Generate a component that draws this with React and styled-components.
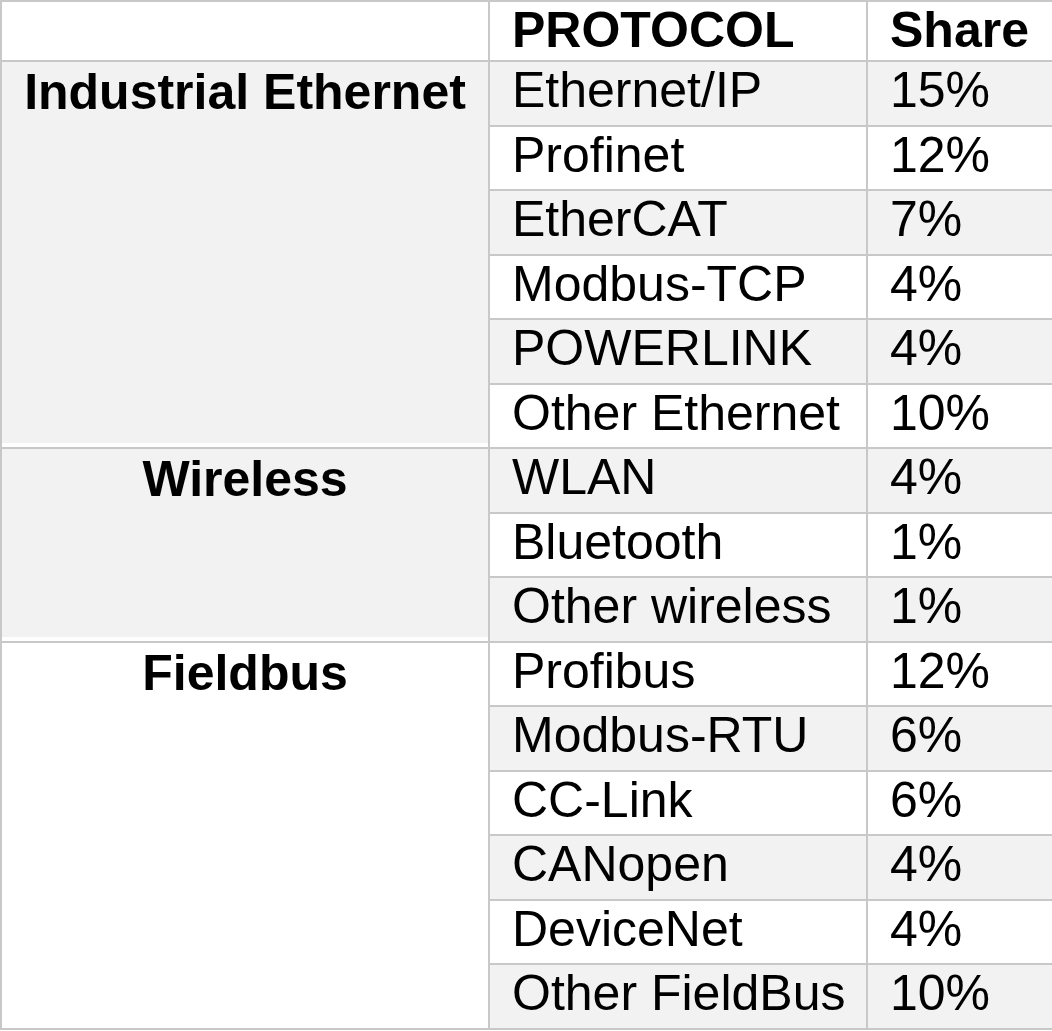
import React from 'react'
import styled, { createGlobalStyle } from 'styled-components'

const GlobalStyle = createGlobalStyle`
  html, body {
    margin: 0;
    padding: 0;
    background: #fff;
    overflow: hidden;
  }
`

const Table = styled.table`
  border-collapse: collapse;
  table-layout: fixed;
  width: 1054px;
  font-family: 'Liberation Sans', Arial, sans-serif;
  font-size: 50px;
  color: #000;
  line-height: 1;
`

const Row = styled.tr`
  height: ${p => (p.head ? '60px' : '64.5px')};
`

const HeadCell = styled.th`
  border: 2px solid #c8c8c8;
  padding: 0 0 2px 22px;
  text-align: left;
  font-weight: 700;
  vertical-align: middle;
  background: #fff;
`

const GroupCell = styled.td`
  border: 2px solid #c8c8c8;
  padding: 5px 0 0;
  text-align: center;
  font-weight: 700;
  vertical-align: top;
  background: ${p =>
    p.shaded ? 'linear-gradient(#f2f2f2 calc(100% - 4px), #fff 0)' : '#fff'};
`

const Cell = styled.td`
  border: 2px solid #c8c8c8;
  padding: 0 0 6px 22px;
  vertical-align: middle;
  white-space: nowrap;
  background: ${p => (p.shaded ? '#f2f2f2' : '#fff')};
`

const groups = [
  {
    name: 'Industrial Ethernet',
    shaded: true,
    items: [
      ['Ethernet/IP', '15%'],
      ['Profinet', '12%'],
      ['EtherCAT', '7%'],
      ['Modbus-TCP', '4%'],
      ['POWERLINK', '4%'],
      ['Other Ethernet', '10%'],
    ],
  },
  {
    name: 'Wireless',
    shaded: true,
    items: [
      ['WLAN', '4%'],
      ['Bluetooth', '1%'],
      ['Other wireless', '1%'],
    ],
  },
  {
    name: 'Fieldbus',
    shaded: false,
    items: [
      ['Profibus', '12%'],
      ['Modbus-RTU', '6%'],
      ['CC-Link', '6%'],
      ['CANopen', '4%'],
      ['DeviceNet', '4%'],
      ['Other FieldBus', '10%'],
    ],
  },
]

export default function App() {
  let index = 0
  return (
    <>
      <GlobalStyle />
      <Table>
        <colgroup>
          <col style={{ width: 488 }} />
          <col style={{ width: 378 }} />
          <col />
        </colgroup>
        <thead>
          <Row head>
            <HeadCell />
            <HeadCell>PROTOCOL</HeadCell>
            <HeadCell>Share</HeadCell>
          </Row>
        </thead>
        <tbody>
          {groups.map(group =>
            group.items.map(([name, share], i) => {
              const shaded = index % 2 === 0
              index += 1
              return (
                <Row key={name}>
                  {i === 0 && (
                    <GroupCell rowSpan={group.items.length} shaded={group.shaded}>
                      {group.name}
                    </GroupCell>
                  )}
                  <Cell shaded={shaded}>{name}</Cell>
                  <Cell shaded={shaded}>{share}</Cell>
                </Row>
              )
            })
          )}
        </tbody>
      </Table>
    </>
  )
}
